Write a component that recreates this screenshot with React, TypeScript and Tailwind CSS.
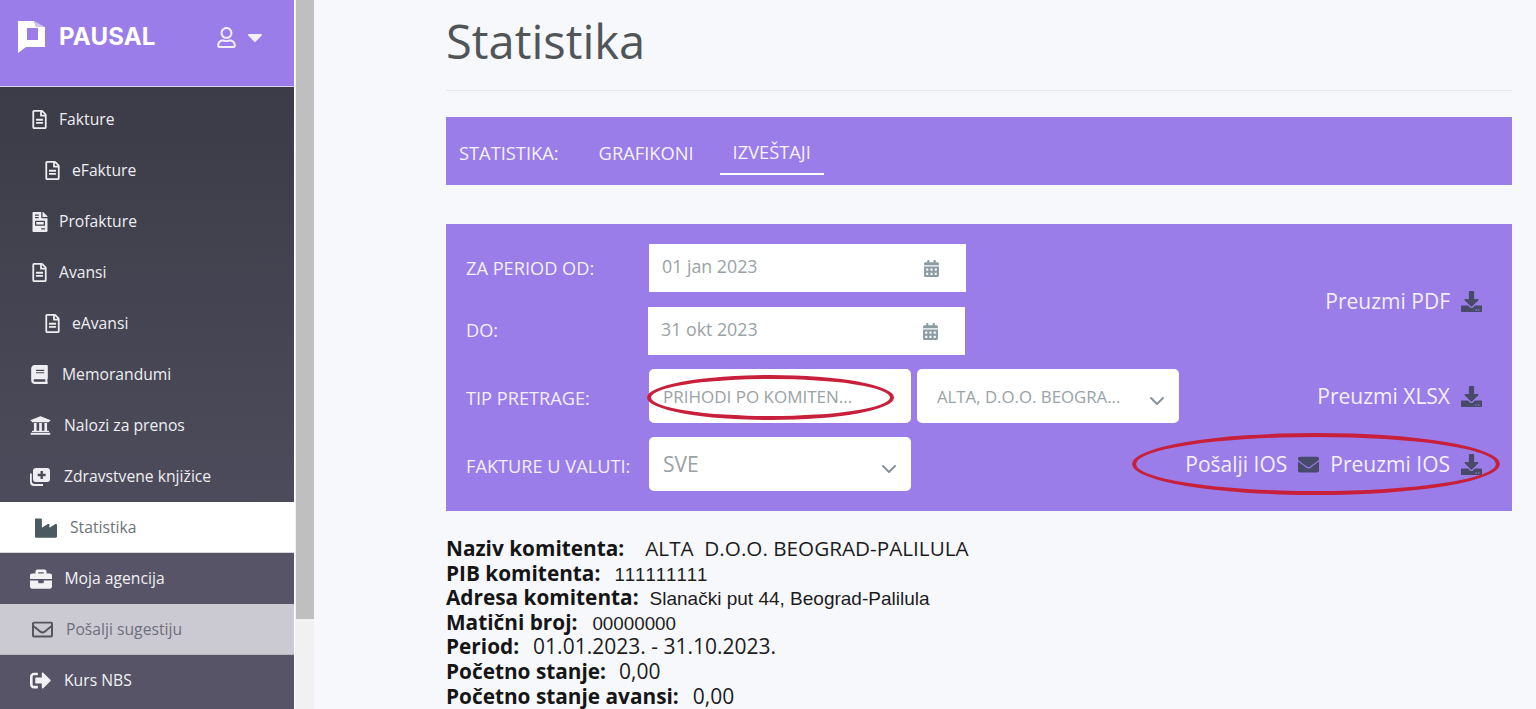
import { ChevronDown } from 'lucide-react';
import type { ReactNode } from 'react';
import {
  FaBook,
  FaBriefcase,
  FaCalendarAlt,
  FaCaretDown,
  FaDownload,
  FaEnvelope,
  FaFileInvoice,
  FaIndustry,
  FaRegEnvelope,
  FaRegFileAlt,
  FaRegUser,
  FaSignOutAlt,
  FaUniversity,
} from 'react-icons/fa';

function MedicalIcon() {
  return (
    <svg width="20" height="18" viewBox="0 0 20 18" fill="currentColor">
      <path d="M6 0h11a3 3 0 0 1 3 3v8a3 3 0 0 1-3 3H6a3 3 0 0 1-3-3V3a3 3 0 0 1 3-3zm4.500 3v2.800H7.700v2.400h2.800V11h2.400V8.200h2.800V5.800h-2.800V3z" fillRule="evenodd" />
      <path d="M0 5.500h1.800V13a3 3 0 0 0 3 3H13v2H4a4 4 0 0 1-4-4z" />
    </svg>
  );
}

function Logo() {
  return (
    <svg width="27" height="32" viewBox="0 0 27 32">
      <path d="M0 0h16l2 6h9v20H8l-8 6z" fill="#fff" />
      <path d="M9 7h11v12H9z" fill="#9a7de8" />
      <path d="M16 0l11 6h-9z" fill="#cfc4f2" />
    </svg>
  );
}

const items: { label: string; icon: ReactNode; pl: string; gap: string; tone?: string }[] = [
  { label: 'Fakture', icon: <FaRegFileAlt size={19} />, pl: 'pl-[30px]', gap: 'w-[29px]' },
  { label: 'eFakture', icon: <FaRegFileAlt size={19} />, pl: 'pl-[43px]', gap: 'w-[29px]' },
  { label: 'Profakture', icon: <FaFileInvoice size={20} />, pl: 'pl-[30px]', gap: 'w-[29px]' },
  { label: 'Avansi', icon: <FaRegFileAlt size={19} />, pl: 'pl-[30px]', gap: 'w-[29px]' },
  { label: 'eAvansi', icon: <FaRegFileAlt size={19} />, pl: 'pl-[43px]', gap: 'w-[29px]' },
  { label: 'Memorandumi', icon: <FaBook size={19} />, pl: 'pl-[30px]', gap: 'w-[32px]' },
  { label: 'Nalozi za prenos', icon: <FaUniversity size={21} />, pl: 'pl-[30px]', gap: 'w-[34px]' },
  { label: 'Zdravstvene knjižice', icon: <MedicalIcon />, pl: 'pl-[30px]', gap: 'w-[34px]' },
  { label: 'Statistika', icon: <FaIndustry size={22} />, pl: 'pl-[35px]', gap: 'w-[35px]', tone: 'active' },
  { label: 'Moja agencija', icon: <FaBriefcase size={22} />, pl: 'pl-[30px]', gap: 'w-[34.500px]', tone: 'solid' },
  { label: 'Pošalji sugestiju', icon: <FaRegEnvelope size={21} />, pl: 'pl-[32px]', gap: 'w-[34px]', tone: 'muted' },
  { label: 'Kurs NBS', icon: <FaSignOutAlt size={21} />, pl: 'pl-[30px]', gap: 'w-[34px]', tone: 'solid' },
];

function SideItem({ label, icon, pl, gap, tone }: (typeof items)[number]) {
  let toneClass = 'text-[#eeeef2]';
  if (tone === 'active') toneClass = 'bg-white text-[#6c7378] border-b border-[#d5d5da] pt-px';
  if (tone === 'solid') toneClass = 'bg-[#565466] text-[#f2f2f5]';
  if (tone === 'muted') toneClass = 'bg-[#cbcad2] text-[#6f6e7c] border-b border-[#b8b7c0] pt-px';

  return (
    <div className={`flex h-[51px] items-center text-[15.700px] ${pl} ${toneClass}`}>
      <span className={`flex shrink-0 items-center ${gap} ${tone === 'active' ? 'text-[#4a5a60]' : ''} ${tone === 'muted' ? 'text-[#55545f]' : ''}`}>{icon}</span>
      <span>{label}</span>
    </div>
  );
}

function DateField({ value, className }: { value: string; className: string }) {
  return (
    <div className={`flex h-[48px] w-[317px] items-center justify-between bg-white pl-[13px] pr-[26px] text-[17.800px] text-[#99a2a6] ${className}`}>
      <span className="-mt-[3px]">{value}</span>
      <FaCalendarAlt size={17} className="text-[#8c9ca3]" />
    </div>
  );
}

function SelectField({ value, className, chevron = true }: { value: string; className: string; chevron?: boolean }) {
  return (
    <div className={`flex h-[54px] w-[262px] items-center justify-between rounded-[5px] bg-white pl-[14px] pr-[10px] text-[#99a2a6] ${className}`}>
      <span className="mt-[2px] whitespace-nowrap">{value}</span>
      {chevron && <ChevronDown size={24} strokeWidth={2} className="mt-[10px] shrink-0 text-[#87939a]" />}
    </div>
  );
}

function Action({ label, icon }: { label: string; icon: ReactNode }) {
  return (
    <span className="flex items-center gap-[11px] text-[21px] leading-[28px] text-[#f3effd]">
      {label}
      {icon}
    </span>
  );
}

const download = <FaDownload size={21} className="text-[#474a68]" />;

const details = [
  { label: 'Naziv komitenta:', value: 'ALTA  D.O.O. BEOGRAD-PALILULA', gap: 'ml-[21px]', font: 'text-[20.700px]' },
  { label: 'PIB komitenta:', value: '111111111', gap: 'ml-[14px]', font: 'text-[18.600px] [font-kerning:none] font-["Liberation_Sans",sans-serif]' },
  { label: 'Adresa komitenta:', value: 'Slanački put 44, Beograd-Palilula', gap: 'ml-[11px]', font: 'text-[19px] font-["Liberation_Sans",sans-serif]' },
  { label: 'Matični broj:', value: '00000000', gap: 'ml-[15px]', font: 'text-[18.800px] font-["Liberation_Sans",sans-serif]' },
  { label: 'Period:', value: '01.01.2023. - 31.10.2023.', gap: 'ml-[14px]', font: 'text-[21px]' },
  { label: 'Početno stanje:', value: '0,00', gap: 'ml-[13px]', font: 'text-[21px]' },
  { label: 'Početno stanje avansi:', value: '0,00', gap: 'ml-[14px]', font: 'text-[21px]' },
];

export default function App() {
  return (
    <div className="flex h-[709px] w-full overflow-hidden bg-[#f7f8fc] font-['Open_Sans',sans-serif]">
      <aside className="flex w-[294px] shrink-0 flex-col bg-gradient-to-b from-[#383843] to-[#565466]">
        <header className="flex h-[87px] shrink-0 items-start justify-between border-b border-[#d8d2ee] bg-[#9a7de8] pl-[18px] pr-[27px] pt-[21px] text-white">
          <div className="flex items-center gap-[14px]">
            <Logo />
            <span className="font-['Inter',sans-serif] text-[24px] font-bold leading-[32px] tracking-[0.2px]">PAUSAL</span>
          </div>
          <div className="flex items-center gap-[6px] pt-[4px] text-[#f2eefc]">
            <FaRegUser size={21} />
            <FaCaretDown size={24} />
          </div>
        </header>
        <nav className="pt-[7px]">
          {items.map((item) => (
            <SideItem key={item.label} {...item} />
          ))}
        </nav>
      </aside>

      <div className="flex w-[20px] shrink-0 border-l border-white bg-[#f1f1f2]">
        <div className="ml-px h-[619px] w-[18px] bg-[#bfbfbf]" />
      </div>

      <main className="relative flex-1 pl-[132px] pr-[24px]">
        <h1 className="pt-[10px] text-[47px] leading-[62px] text-[#505558]">Statistika</h1>
        <div className="mt-[18px] border-b border-[#e3e5ea]" />

        <div className="mt-[26px] flex h-[68px] items-start bg-[#9a7de8] pl-[13px] pt-[14px] text-[18.300px] text-[#f5f2fe]">
          <span className="flex h-[44px] items-center">STATISTIKA:</span>
          <span className="ml-[40px] flex h-[44px] items-center">GRAFIKONI</span>
          <span className="ml-[26px] flex h-[44px] items-center border-b-2 border-white px-[13px]">IZVEŠTAJI</span>
        </div>

        <section className="mt-[39px] flex h-[287px] justify-between bg-[#9a7de8] pl-[20px] pr-[30px] pt-[20px]">
          <div className="grid grid-cols-[183px_auto] content-start text-[18.200px] text-[#f3effd]">
            <span className="flex h-[48px] items-center pt-[2px]">ZA PERIOD OD:</span>
            <DateField value="01 jan 2023" className="" />
            <span className="mt-[15px] flex h-[48px] items-center pb-[1px]">DO:</span>
            <DateField value="31 okt 2023" className="-ml-px mt-[15px]" />
            <span className="mt-[14px] flex h-[54px] items-center pt-[5px]">TIP PRETRAGE:</span>
            <div className="mt-[14px] flex gap-[6px]">
              <SelectField value="PRIHODI PO KOMITEN..." className="text-[17px]" chevron={false} />
              <SelectField value="ALTA, D.O.O. BEOGRA..." className="pl-[20px] text-[16.800px]" />
            </div>
            <span className="mt-[14px] flex h-[54px] items-center pt-[6px]">FAKTURE U VALUTI:</span>
            <SelectField value="SVE" className="mt-[14px] text-[21px]" />
          </div>
          <div className="flex flex-col items-end pt-[43px]">
            <Action label="Preuzmi PDF" icon={download} />
            <div className="mt-[67px]">
              <Action label="Preuzmi XLSX" icon={download} />
            </div>
            <div className="mt-[40px] flex items-center gap-[11px]">
              <Action label="Pošalji IOS" icon={<FaEnvelope size={21} className="text-[#474a68]" />} />
              <Action label="Preuzmi IOS" icon={download} />
            </div>
          </div>
        </section>

        <div className="mt-[25px] text-[20.800px] leading-[24.600px] text-[#1c1c1c]">
          {details.map((row) => (
            <div key={row.label} className="flex h-[24.600px] items-baseline whitespace-pre">
              <b className="font-bold text-[#151515]">{row.label}</b>
              <span className={`${row.gap} ${row.font} font-normal`}>{row.value}</span>
            </div>
          ))}
        </div>

        {/* red marker circles drawn over the panel */}
        <div className="absolute left-[333px] top-[375px] h-[45px] w-[247px] rounded-[50%] border-[4px] border-[#c8203a]" />
        <div className="absolute left-[818px] top-[433px] h-[62px] w-[368px] rounded-[50%] border-[4px] border-[#c8203a]" />
      </main>
    </div>
  );
}
